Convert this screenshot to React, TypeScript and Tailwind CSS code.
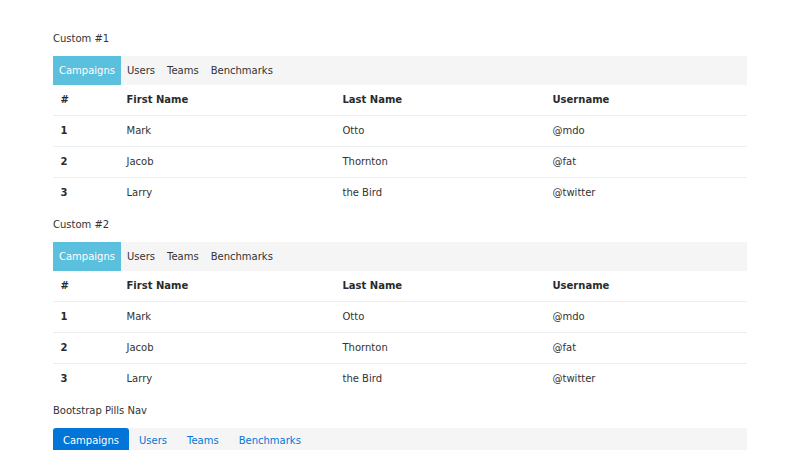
const rows = [
    { id: 1, first: "Mark", last: "Otto", user: "@mdo" },
    { id: 2, first: "Jacob", last: "Thornton", user: "@fat" },
    { id: 3, first: "Larry", last: "the Bird", user: "@twitter" },
];

const tabs = ["Campaigns", "Users", "Teams", "Benchmarks"];

const grid = "grid grid-cols-[66px_216px_210px_202px]";

const DataTable = () => (
    <div>
        <div className={`${grid} h-[31px] items-center border-b border-[#eceeef] pb-[2px] font-bold text-[#292b2c]`}>
            <div className="px-[7.5px]">#</div>
            <div className="px-[7.5px]">First Name</div>
            <div className="px-[7.5px]">Last Name</div>
            <div className="px-[7.5px]">Username</div>
        </div>
        {rows.map((row, i) => (
            <div
                key={row.id}
                className={`${grid} items-center pb-[2px] ${i < rows.length - 1 ? "h-[31px] border-b border-[#eceeef]" : "h-[30px]"}`}
            >
                <div className="px-[7.5px] font-bold text-[#292b2c]">{row.id}</div>
                <div className="px-[7.5px]">{row.first}</div>
                <div className="px-[7.5px]">{row.last}</div>
                <div className="px-[7.5px]">{row.user}</div>
            </div>
        ))}
    </div>
);

const CustomTabs = () => (
    <div className="flex h-[29px] bg-[#f5f5f5]">
        {tabs.map((tab, i) => (
            <div
                key={tab}
                className={`flex items-center px-[6px] ${i === 0 ? "bg-[#5bc0de] text-white" : ""}`}
            >
                {tab}
            </div>
        ))}
    </div>
);

const PillsNav = () => (
    <div className="flex h-[30px] items-start bg-[#f5f5f5]">
        {tabs.map((tab, i) => (
            <div
                key={tab}
                className={`flex h-[25px] items-center rounded-[3px] px-[10px] ${i === 0 ? "bg-[#0275d8] text-white" : "text-[#0275d8]"}`}
            >
                {tab}
            </div>
        ))}
    </div>
);

const Heading = ({ children }: { children: string }) => (
    <div className="pt-[8.5px] pb-[10.5px] leading-[15px]">{children}</div>
);

export default function App() {
    return (
        <div className="h-[450px] overflow-hidden bg-white text-[10px] leading-[15px] text-[#333] font-['DejaVu_Sans',sans-serif]">
            <div className="mx-auto w-[694px] pt-[22px]">
                <Heading>Custom #1</Heading>
                <CustomTabs />
                <DataTable />
                <Heading>Custom #2</Heading>
                <CustomTabs />
                <DataTable />
                <Heading>Bootstrap Pills Nav</Heading>
                <PillsNav />
            </div>
        </div>
    );
}
